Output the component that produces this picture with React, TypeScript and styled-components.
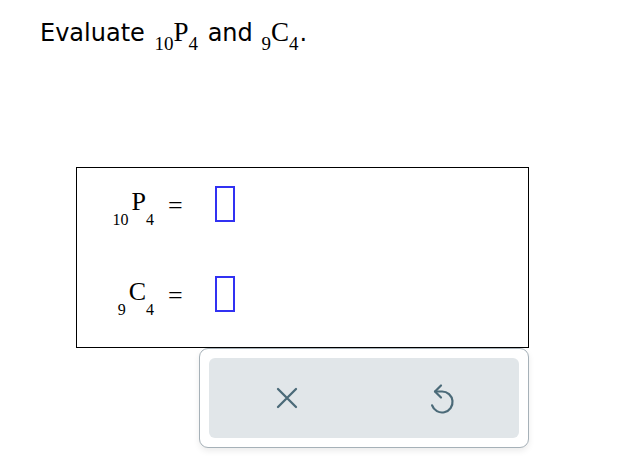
import React from 'react';
import styled, { createGlobalStyle } from 'styled-components';

const GlobalStyle = createGlobalStyle`
  body {
    margin: 0;
    background: #ffffff;
    font-family: "DejaVu Sans", Verdana, sans-serif;
    color: #000000;
  }
`;

const Page = styled.div`
  width: 624px;
  height: 472px;
  box-sizing: border-box;
  padding-top: 18px;
`;

const Title = styled.div`
  margin-left: 40px;
  font-size: 24px;
  line-height: 30px;
  height: 30px;
  white-space: nowrap;
`;

const Notation = styled.span<{ $size: number; $space: number }>`
  font-family: "Liberation Serif", "Times New Roman", serif;
  font-size: ${p => p.$size}px;
  line-height: 1;
  white-space: nowrap;
  margin: 0 ${p => p.$space}px;
`;

const Sub = styled.span<{ $size: number; $drop: number; $gap?: number }>`
  font-size: ${p => p.$size}px;
  vertical-align: -${p => p.$drop}px;
  margin-right: ${p => p.$gap ?? 0}px;
`;

const Column = styled.div`
  display: flex;
  flex-direction: column;
  align-items: flex-end;
  width: 453px;
  margin: 119px 0 0 76px;
`;

const AnswerBox = styled.div`
  width: 453px;
  box-sizing: border-box;
  border: 1px solid #000000;
  padding: 18px 0 35px;
  display: flex;
  flex-direction: column;
  gap: 54px;
`;

const Row = styled.div`
  display: flex;
  align-items: center;
  height: 36px;
`;

const Label = styled.div`
  width: 77px;
  display: flex;
  justify-content: flex-end;
  line-height: 36px;
  padding-top: 8px;
`;

const Equals = styled.span`
  font-family: "Liberation Serif", "Times New Roman", serif;
  font-size: 26px;
  margin: 3px 0 0 14px;
`;

const Blank = styled.div`
  width: 20px;
  height: 36px;
  box-sizing: border-box;
  border: 2px solid #3131f2;
  margin-left: 32px;
`;

const Controls = styled.div`
  width: 330px;
  box-sizing: border-box;
  border: 1px solid #a6b1b8;
  border-radius: 9px;
  padding: 9px;
  background: #ffffff;
  box-shadow: 0 3px 6px rgba(0, 0, 0, 0.08);
`;

const ControlBar = styled.div`
  display: flex;
  height: 80px;
  border-radius: 6px;
  background: #e1e6e9;
`;

const IconButton = styled.button`
  flex: 1;
  border: none;
  background: transparent;
  display: flex;
  align-items: center;
  justify-content: center;
  padding: 0;
  color: #4b6a78;
  cursor: pointer;
`;

type PermProps = {
  pre: string;
  base: string;
  post: string;
  size: number;
  subSize: number;
  drop: number;
  gap?: number;
  space?: number;
};

const Perm = ({ pre, base, post, size, subSize, drop, gap = 0, space = 0 }: PermProps) => (
  <Notation $size={size} $space={space}>
    <Sub $size={subSize} $drop={drop} $gap={gap}>{pre}</Sub>
    {base}
    <Sub $size={subSize} $drop={drop}>{post}</Sub>
  </Notation>
);

const App: React.FC = () => {
  return (
    <Page>
      <GlobalStyle />
      <Title>
        Evaluate <Perm pre="10" base="P" post="4" size={27} subSize={19} drop={9} space={2} /> and{' '}
        <Perm pre="9" base="C" post="4" size={27} subSize={19} drop={9} space={1} />.
      </Title>
      <Column>
        <AnswerBox>
          <Row>
            <Label>
              <Perm pre="10" base="P" post="4" size={26} subSize={16} drop={15} gap={3} />
            </Label>
            <Equals>=</Equals>
            <Blank />
          </Row>
          <Row>
            <Label>
              <Perm pre="9" base="C" post="4" size={26} subSize={16} drop={15} gap={3} />
            </Label>
            <Equals>=</Equals>
            <Blank />
          </Row>
        </AnswerBox>
        <Controls>
          <ControlBar>
            <IconButton aria-label="clear">
              <svg width="22" height="22" viewBox="0 0 22 22" fill="none" stroke="currentColor" strokeWidth="2.3" strokeLinecap="round">
                <path d="M2 2 L20 20 M20 2 L2 20" />
              </svg>
            </IconButton>
            <IconButton aria-label="undo">
              <svg width="28" height="32" viewBox="0 0 28 32" fill="none" stroke="currentColor" strokeWidth="2.2" strokeLinecap="round" strokeLinejoin="round" style={{ marginTop: 1 }}>
                <path d="M13 2.5 L7 8.5 L13 14.5" />
                <path d="M7 8.5 H14 A10.5 10.5 0 1 1 4.1 22.4" />
              </svg>
            </IconButton>
          </ControlBar>
        </Controls>
      </Column>
    </Page>
  );
};

export default App;
